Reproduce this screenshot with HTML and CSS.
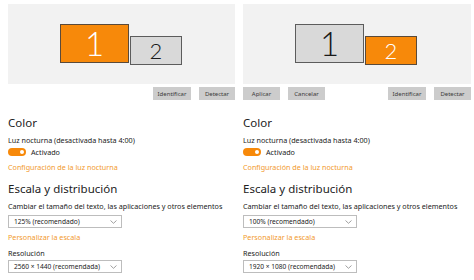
FILE: index.html
```html
<!DOCTYPE html>
<html lang="es">
<head>
<meta charset="utf-8">
<link rel="stylesheet" href="styles.css">
</head>
<body>
<div class="page">
  <section class="col">
    <div class="canvas">
      <div class="mon big accent">1</div>
      <div class="mon small plain">2</div>
    </div>
    <div class="btnrow">
      <span class="spacer"></span>
      <button class="btn w38">Identificar</button>
      <button class="btn w36">Detectar</button>
    </div>
    <div class="settings">
      <h2 class="h">Color</h2>
      <p class="t luz">Luz nocturna (desactivada hasta 4:00)</p>
      <div class="toggle-row"><span class="toggle"><span class="knob"></span></span><span class="t">Activado</span></div>
      <p class="link cfg">Configuración de la luz nocturna</p>
      <h2 class="h esc">Escala y distribución</h2>
      <p class="t cam">Cambiar el tamaño del texto, las aplicaciones y otros elementos</p>
      <div class="select s1"><span>125% (recomendado)</span><svg class="chev" width="7" height="4" viewBox="0 0 7 4"><path d="M0.5 0.5 L3.5 3.3 L6.5 0.5" fill="none" stroke="#888" stroke-width="0.8"/></svg></div>
      <p class="link per">Personalizar la escala</p>
      <p class="t res">Resolución</p>
      <div class="select s2"><span>2560 × 1440 (recomendada)</span><svg class="chev" width="7" height="4" viewBox="0 0 7 4"><path d="M0.5 0.5 L3.5 3.3 L6.5 0.5" fill="none" stroke="#888" stroke-width="0.8"/></svg></div>
    </div>
  </section>
  <section class="col">
    <div class="canvas">
      <div class="mon big plain">1</div>
      <div class="mon small accent">2</div>
    </div>
    <div class="btnrow">
      <button class="btn w37">Aplicar</button>
      <button class="btn w37">Cancelar</button>
      <span class="spacer"></span>
      <button class="btn w38">Identificar</button>
      <button class="btn w37">Detectar</button>
    </div>
    <div class="settings">
      <h2 class="h">Color</h2>
      <p class="t luz">Luz nocturna (desactivada hasta 4:00)</p>
      <div class="toggle-row"><span class="toggle"><span class="knob"></span></span><span class="t">Activado</span></div>
      <p class="link cfg">Configuración de la luz nocturna</p>
      <h2 class="h esc">Escala y distribución</h2>
      <p class="t cam">Cambiar el tamaño del texto, las aplicaciones y otros elementos</p>
      <div class="select s1"><span>100% (recomendado)</span><svg class="chev" width="7" height="4" viewBox="0 0 7 4"><path d="M0.5 0.5 L3.5 3.3 L6.5 0.5" fill="none" stroke="#888" stroke-width="0.8"/></svg></div>
      <p class="link per">Personalizar la escala</p>
      <p class="t res">Resolución</p>
      <div class="select s2"><span>1920 × 1080 (recomendada)</span><svg class="chev" width="7" height="4" viewBox="0 0 7 4"><path d="M0.5 0.5 L3.5 3.3 L6.5 0.5" fill="none" stroke="#888" stroke-width="0.8"/></svg></div>
    </div>
  </section>
</div>
</body>
</html>
```
FILE: styles.css
```css
* { box-sizing: border-box; }
html, body { margin: 0; padding: 0; background: #fff; }
body {
  width: 474px; height: 280px; overflow: hidden;
  font-family: "Noto Sans", "Open Sans", sans-serif;
  color: #1a1a1a;
}
.page {
  display: grid;
  grid-template-columns: 227px 228px;
  column-gap: 8px;
  padding: 4px 0 0 8px;
}
.col { display: flex; flex-direction: column; }
.canvas {
  height: 80px;
  background: #f2f2f2;
  display: flex;
  align-items: flex-start;
  padding: 20px 0 0 52px;
}
.mon {
  display: flex; align-items: center; justify-content: center;
  font-family: "Lato", "Open Sans", sans-serif;
  font-weight: 300;
  line-height: 1;
}
.big { width: 69px; height: 39px; font-size: 33px; }
.small { width: 52px; height: 29px; margin: 12px 0 0 1px; font-size: 22px; }
.accent { background: #f7890a; border: 1px solid #5a4a3a; color: #fff; }
.plain { background: #d9d9d9; border: 1px solid #5c5c5c; color: #1a1a1a; }
.btnrow {
  display: flex; gap: 8px; margin-top: 3px; height: 13px;
}
.spacer { flex: 1; }
.btn {
  height: 13px; padding: 0; border: 0;
  background: #cccccc; color: #3a3a3a;
  font-family: "Noto Sans", sans-serif; font-size: 6px;
}
.w36 { width: 36px; } .w37 { width: 37px; } .w38 { width: 38px; }
.h { margin: 0; font-weight: 400; font-size: 11.5px; line-height: 14px; color: #222; }
.settings > .h:first-child { margin-top: 16px; }
.t { margin: 0; font-size: 7.2px; line-height: 9px; color: #222; }
.luz { margin-top: 6px; }
.toggle-row { display: flex; align-items: center; gap: 5px; margin-top: 3px; height: 8px; }
.toggle {
  width: 18px; height: 8px; border-radius: 4px; background: #f7890a;
  display: flex; align-items: center; justify-content: flex-end; padding-right: 2px;
}
.knob { width: 4px; height: 4px; border-radius: 50%; background: #fff; }
.link { margin: 0; font-size: 7.2px; line-height: 9px; color: #f29a2e; }
.cfg { margin-top: 7px; }
.esc { margin-top: 10px; }
.cam { margin-top: 6px; }
.select {
  width: 114px; height: 13px;
  border: 1px solid #bdbdbd; background: #fff;
  display: flex; align-items: center; justify-content: space-between;
  padding: 0 4px 0 5px;
  font-size: 6.6px; color: #222;
}
.s1 { margin-top: 4px; }
.s2 { margin-top: 2px; }
.per { margin-top: 5px; }
.res { margin-top: 7px; }
```
